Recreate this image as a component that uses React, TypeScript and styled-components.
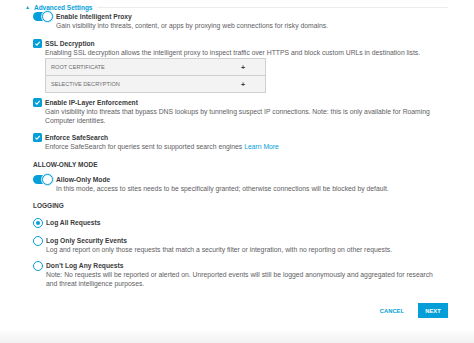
import React from 'react';
import styled, { createGlobalStyle } from 'styled-components';

const GlobalStyle = createGlobalStyle`
    body {
        margin: 0;
        background: #fff;
        font-family: 'Liberation Sans', Arial, sans-serif;
        color: #39393b;
    }
`;

const Page = styled.main`
    width: 474px;
    height: 343px;
    overflow: hidden;
    display: flex;
    flex-direction: column;
`;

const Content = styled.div`
    padding: 2px 26px 0 25px;
    flex: 1;
`;

const SectionHead = styled.div`
    display: flex;
    align-items: center;
    gap: 3px;
    font-size: 6.5px;
    font-weight: bold;
    color: #049fd9;
    height: 10px;

    &::after {
        content: '';
        flex: 1;
        border-top: 1px solid #ececec;
        margin-left: 2px;
    }
`;

const Caret = styled.span`
    font-size: 5px;
    margin-right: 1px;
`;

const Body = styled.div`
    padding-left: 8px;
`;

const Option = styled.div<{ $mt?: number }>`
    display: flex;
    align-items: flex-start;
    margin-top: ${(p) => p.$mt ?? 0}px;
`;

const OptionText = styled.div`
    flex: 1;
`;

const Title = styled.div`
    font-size: 6.7px;
    font-weight: bold;
    line-height: 9px;
    color: #39393b;
`;

const Desc = styled.div`
    font-size: 6.8px;
    line-height: 9px;
    color: #606063;
`;

const Link = styled.span`
    color: #049fd9;
`;

const Toggle = styled.span`
    width: 19px;
    height: 9px;
    border-radius: 5px;
    background: #049fd9;
    position: relative;
    margin-right: 4px;
    flex: none;

    &::after {
        content: '';
        position: absolute;
        right: -1px;
        top: -1px;
        width: 9px;
        height: 9px;
        border-radius: 50%;
        background: #fff;
        border: 1px solid #049fd9;
        box-shadow: 0 0 0 1px #cde9f6;
    }
`;

const Check = styled.span`
    width: 9px;
    height: 9px;
    border-radius: 1.5px;
    background: #049fd9;
    margin-right: 3px;
    flex: none;
    display: flex;
    align-items: center;
    justify-content: center;
`;

const Radio = styled.span<{ $on?: boolean }>`
    width: 8px;
    height: 8px;
    border-radius: 50%;
    border: 1px solid #049fd9;
    background: #fff;
    margin-right: 3px;
    flex: none;
    display: flex;
    align-items: center;
    justify-content: center;

    &::after {
        content: '';
        width: 4px;
        height: 4px;
        border-radius: 50%;
        background: ${(p) => (p.$on ? '#049fd9' : 'transparent')};
    }
`;

const Table = styled.div`
    width: 219px;
    margin-top: 1px;
    border: 1px solid #d0d0d0;
    background: #f3f3f3;
`;

const TableRow = styled.div`
    display: flex;
    align-items: center;
    height: 16px;
    font-size: 5.6px;
    color: #6b6b6b;
    padding-left: 5px;

    & + & {
        border-top: 1px solid #d0d0d0;
    }
`;

const RowLabel = styled.span`
    flex: 1;
`;

const Plus = styled.span`
    width: 44px;
    text-align: center;
    font-size: 7px;
    font-weight: bold;
    color: #39393b;
`;

const GroupHead = styled.div<{ $mt: number }>`
    font-size: 6.5px;
    font-weight: bold;
    color: #39393b;
    margin-top: ${(p) => p.$mt}px;
    line-height: 9px;
`;

const Footer = styled.div`
    display: flex;
    justify-content: flex-end;
    align-items: center;
    gap: 14px;
    padding: 0 26px 12px 0;
`;

const Cancel = styled.span`
    font-size: 5.8px;
    font-weight: bold;
    color: #049fd9;
`;

const Next = styled.span`
    width: 30px;
    height: 15px;
    background: #049fd9;
    color: #fff;
    font-size: 5.8px;
    font-weight: bold;
    display: flex;
    align-items: center;
    justify-content: center;
`;

const Shade = styled.div`
    height: 13px;
    background: linear-gradient(#fdfdfd, #f1f1f1);
`;

const Tick = () => (
    <svg width="7" height="7" viewBox="0 0 10 10">
        <path d="M2 5.2 L4.2 7.3 L8.2 2.8" fill="none" stroke="#fff" strokeWidth="1.6" />
    </svg>
);

function App() {
    return (
        <Page>
            <GlobalStyle />
            <Content>
                <SectionHead>
                    <Caret>▲</Caret>Advanced Settings
                </SectionHead>
                <Body>
                    <Option>
                        <Toggle />
                        <OptionText>
                            <Title>Enable Intelligent Proxy</Title>
                            <Desc>Gain visibility into threats, content, or apps by proxying web connections for risky domains.</Desc>
                        </OptionText>
                    </Option>

                    <Option $mt={9}>
                        <Check>
                            <Tick />
                        </Check>
                        <OptionText>
                            <Title>SSL Decryption</Title>
                            <Desc>Enabling SSL decryption allows the intelligent proxy to inspect traffic over HTTPS and block custom URLs in destination lists.</Desc>
                            <Table>
                                <TableRow>
                                    <RowLabel>ROOT CERTIFICATE</RowLabel>
                                    <Plus>+</Plus>
                                </TableRow>
                                <TableRow>
                                    <RowLabel>SELECTIVE DECRYPTION</RowLabel>
                                    <Plus>+</Plus>
                                </TableRow>
                            </Table>
                        </OptionText>
                    </Option>

                    <Option $mt={5}>
                        <Check>
                            <Tick />
                        </Check>
                        <OptionText>
                            <Title>Enable IP-Layer Enforcement</Title>
                            <Desc>
                                Gain visibility into threats that bypass DNS lookups by tunneling suspect IP connections. Note: this is only available for Roaming
                                <br />
                                Computer identities.
                            </Desc>
                        </OptionText>
                    </Option>

                    <Option $mt={8}>
                        <Check>
                            <Tick />
                        </Check>
                        <OptionText>
                            <Title>Enforce SafeSearch</Title>
                            <Desc>
                                Enforce SafeSearch for queries sent to supported search engines <Link>Learn More</Link>
                            </Desc>
                        </OptionText>
                    </Option>

                    <GroupHead $mt={9}>ALLOW-ONLY MODE</GroupHead>

                    <Option $mt={6}>
                        <Toggle />
                        <OptionText>
                            <Title>Allow-Only Mode</Title>
                            <Desc>In this mode, access to sites needs to be specifically granted; otherwise connections will be blocked by default.</Desc>
                        </OptionText>
                    </Option>

                    <GroupHead $mt={8}>LOGGING</GroupHead>

                    <Option $mt={8}>
                        <Radio $on />
                        <OptionText>
                            <Title>Log All Requests</Title>
                        </OptionText>
                    </Option>

                    <Option $mt={8}>
                        <Radio />
                        <OptionText>
                            <Title>Log Only Security Events</Title>
                            <Desc>Log and report on only those requests that match a security filter or integration, with no reporting on other requests.</Desc>
                        </OptionText>
                    </Option>

                    <Option $mt={7}>
                        <Radio />
                        <OptionText>
                            <Title>Don’t Log Any Requests</Title>
                            <Desc>
                                Note: No requests will be reported or alerted on. Unreported events will still be logged anonymously and aggregated for research
                                <br />
                                and threat intelligence purposes.
                            </Desc>
                        </OptionText>
                    </Option>
                </Body>
            </Content>
            <Footer>
                <Cancel>CANCEL</Cancel>
                <Next>NEXT</Next>
            </Footer>
            <Shade />
        </Page>
    );
}

export default App;
